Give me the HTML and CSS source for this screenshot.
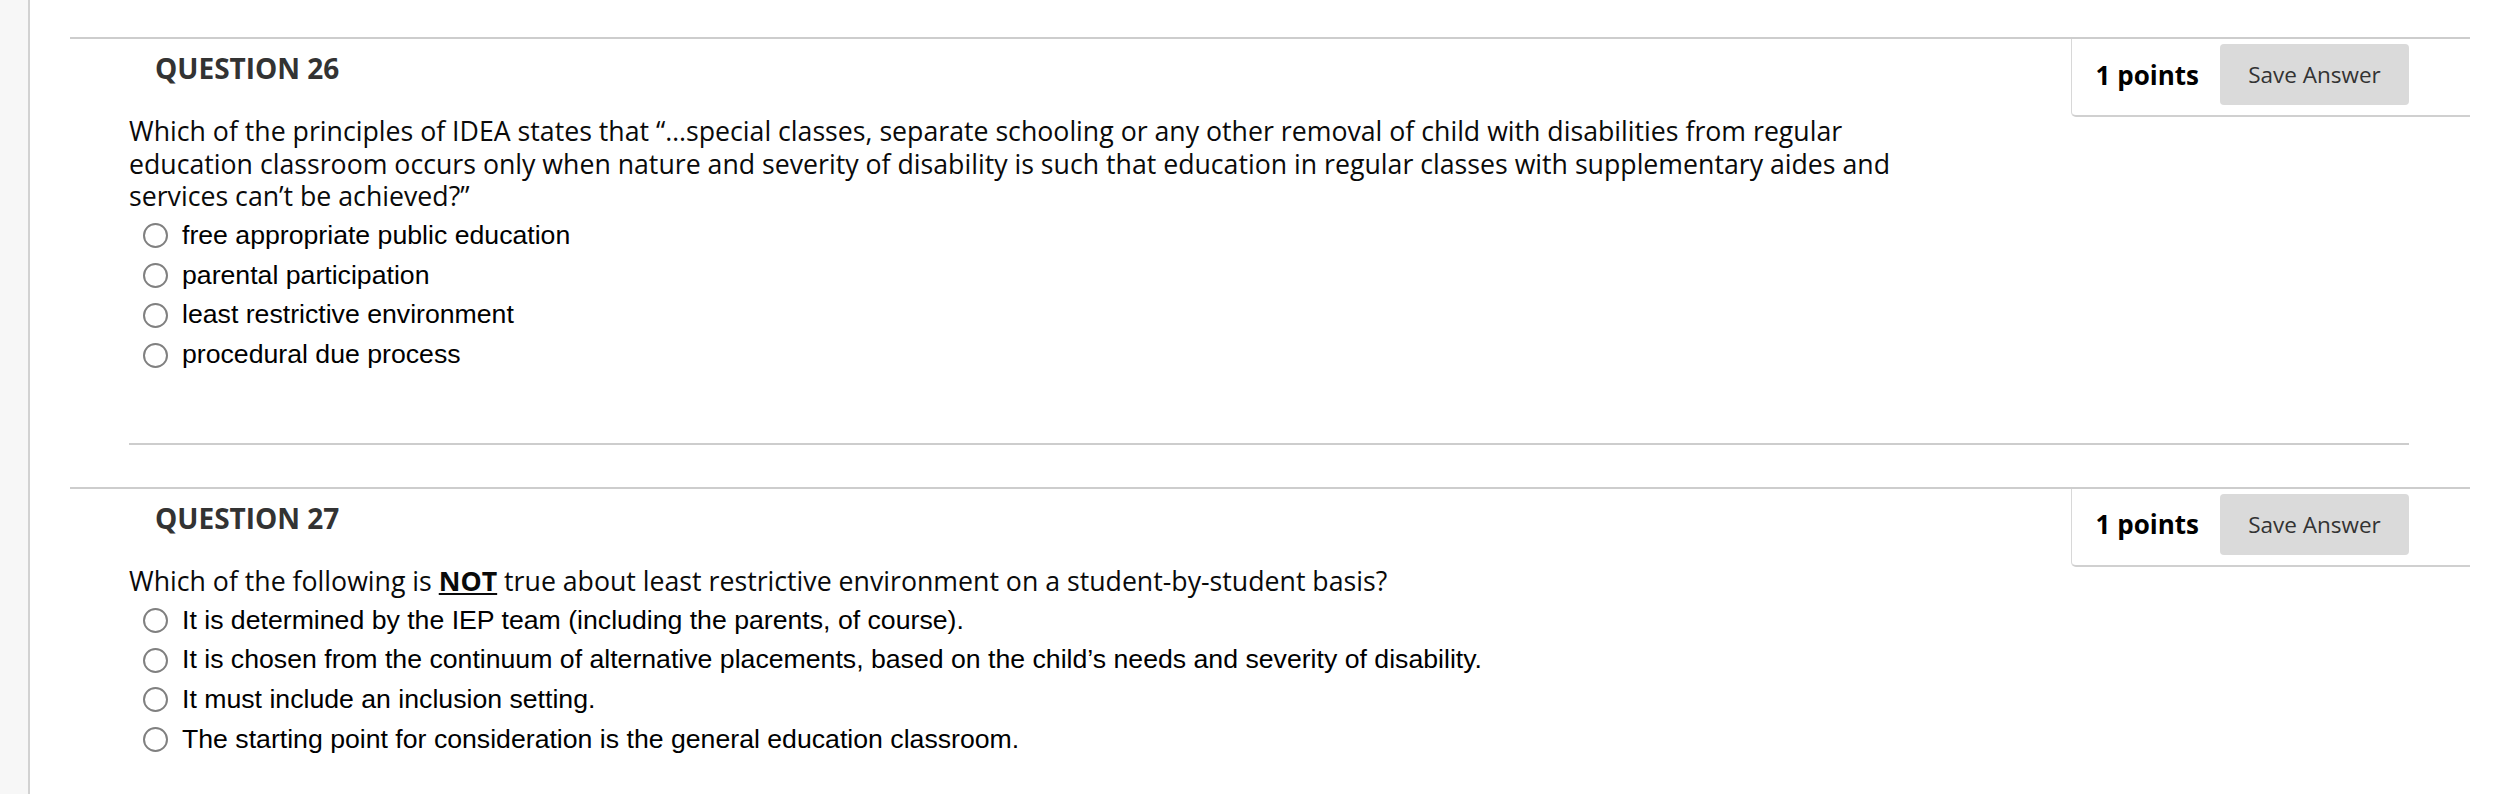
FILE: index.html
```html
<!DOCTYPE html>
<html lang="en">
<head>
<meta charset="utf-8">
<title>Test questions</title>
<link rel="stylesheet" href="styles.css">
</head>
<body>
<div class="sidebar"></div>
<main class="main">
  <section class="question">
    <div class="q-head">
      <h3 class="q-title">QUESTION 26</h3>
      <div class="points-box">
        <span class="points">1 points</span>
        <button class="save-btn" type="button">Save Answer</button>
      </div>
    </div>
    <div class="q-body">
      <p class="q-text">Which of the principles of IDEA states that “…special classes, separate schooling or any other removal of child with disabilities from regular education classroom occurs only when nature and severity of disability is such that education in regular classes with supplementary aides and services can’t be achieved?”</p>
      <ul class="options">
        <li class="option"><span class="radio"></span>free appropriate public education</li>
        <li class="option"><span class="radio"></span>parental participation</li>
        <li class="option"><span class="radio"></span>least restrictive environment</li>
        <li class="option"><span class="radio"></span>procedural due process</li>
      </ul>
      <div class="separator"></div>
    </div>
  </section>
  <section class="question">
    <div class="q-head">
      <h3 class="q-title">QUESTION 27</h3>
      <div class="points-box">
        <span class="points">1 points</span>
        <button class="save-btn" type="button">Save Answer</button>
      </div>
    </div>
    <div class="q-body">
      <p class="q-text">Which of the following is <span class="em-not">NOT</span> true about least restrictive environment on a student-by-student basis?</p>
      <ul class="options">
        <li class="option"><span class="radio"></span>It is determined by the IEP team (including the parents, of course).</li>
        <li class="option"><span class="radio"></span>It is chosen from the continuum of alternative placements, based on the child’s needs and severity of disability.</li>
        <li class="option"><span class="radio"></span>It must include an inclusion setting.</li>
        <li class="option"><span class="radio"></span>The starting point for consideration is the general education classroom.</li>
      </ul>
    </div>
  </section>
</main>
</body>
</html>
```

FILE: styles.css
```css
* { box-sizing: border-box; }

html, body {
  margin: 0;
  padding: 0;
  background: #fff;
}

body {
  display: flex;
  min-height: 794px;
  font-family: "Open Sans", "Liberation Sans", sans-serif;
  overflow: hidden;
}

.sidebar {
  width: 30px;
  flex: none;
  background: #f7f7f7;
  border-right: 2px solid #d2d2d2;
}

.main {
  flex: 1;
  padding: 37px 28px 0 40px;
}

.question {
  border-top: 2px solid #cdcdcd;
}

.question + .question {
  margin-top: 42px;
}

.q-head {
  display: flex;
  justify-content: space-between;
  align-items: flex-start;
}

.q-title {
  margin: 0;
  padding: 10px 0 0 85px;
  font-size: 28px;
  line-height: 38px;
  font-weight: 700;
  color: #333;
}

.points-box {
  display: flex;
  align-items: center;
  gap: 21px;
  padding: 5px 61px 10px 24px;
  border-left: 1px solid #d8d8d8;
  border-bottom: 2px solid #d0d0d0;
  border-bottom-left-radius: 5px;
}

.points {
  font-size: 26px;
  font-weight: 700;
  color: #000;
}

.save-btn {
  width: 189px;
  height: 61px;
  padding: 0;
  background: #dadada;
  border: 0;
  border-radius: 4px;
  font-family: "Open Sans", "Liberation Sans", sans-serif;
  font-size: 22.5px;
  color: #333;
}

.q-body {
  padding: 0 61px 0 59px;
}

.q-text {
  margin: -2px 0 0;
  max-width: 1820px;
  font-size: 26.7px;
  line-height: 32.7px;
  color: #0a0a0a;
}

.em-not {
  font-weight: 700;
  text-decoration: underline;
}

.options {
  list-style: none;
  margin: 3px 0 0;
  padding: 0 0 0 14px;
  font-family: "Liberation Sans", Arial, sans-serif;
  font-size: 26.67px;
  color: #000;
}

.option {
  display: flex;
  align-items: center;
  height: 39.7px;
  line-height: 39.7px;
}

.radio {
  flex: none;
  width: 25px;
  height: 25px;
  margin-right: 14px;
  border: 2px solid #808080;
  border-radius: 50%;
  background: #fff;
}

.separator {
  height: 2px;
  margin-top: 68px;
  background: #cdcdcd;
}
```
